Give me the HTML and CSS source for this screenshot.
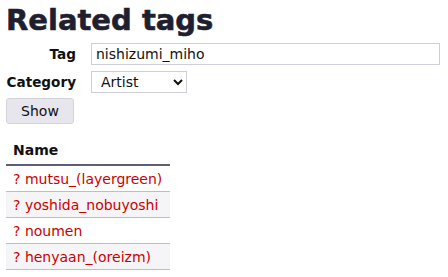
FILE: index.html
```html
<!DOCTYPE html>
<html>
<head>
<meta charset="utf-8">
<link rel="stylesheet" href="styles.css">
</head>
<body>
<div class="page">
  <h1 class="title">Related tags</h1>
  <form class="search-form">
    <label class="field-label" for="tag">Tag</label>
    <input class="text-input" id="tag" type="text" value="nishizumi_miho">
    <label class="field-label" for="cat">Category</label>
    <div class="select-wrap">
      <select class="select-input" id="cat">
        <option>Artist</option>
      </select>
    </div>
  </form>
  <button class="show-button" type="button">Show</button>
  <table class="tags-table">
    <thead>
      <tr><th>Name</th></tr>
    </thead>
    <tbody>
      <tr><td><a class="tag-link" href="#">? mutsu_(layergreen)</a></td></tr>
      <tr class="even"><td><a class="tag-link" href="#">? yoshida_nobuyoshi</a></td></tr>
      <tr><td><a class="tag-link" href="#">? noumen</a></td></tr>
      <tr class="even"><td><a class="tag-link" href="#">? henyaan_(oreizm)</a></td></tr>
    </tbody>
  </table>
</div>
</body>
</html>
```

FILE: styles.css
```css
html, body {
  margin: 0;
  padding: 0;
  background: #fff;
}
body {
  font-family: "DejaVu Sans", Verdana, sans-serif;
  font-size: 14px;
  color: #111;
}
.page {
  padding: 0 6px;
}
.title {
  margin: 0;
  padding-top: 2px;
  font-size: 29px;
  line-height: 36px;
  font-weight: bold;
  color: #1f1f30;
  -webkit-text-stroke: 0.6px #1f1f30;
}
.search-form {
  display: grid;
  grid-template-columns: 70px 1fr;
  column-gap: 15px;
  row-gap: 6px;
  align-items: center;
  margin-top: 5px;
}
.field-label {
  text-align: right;
  font-weight: bold;
  font-size: 13.6px;
}
.text-input {
  box-sizing: border-box;
  height: 22px;
  width: 349px;
  border: 1px solid #cfcfdc;
  padding: 0 4px;
  font-family: "DejaVu Sans", Verdana, sans-serif;
  font-size: 14px;
  color: #111;
  outline: none;
}
.select-input {
  box-sizing: border-box;
  height: 22px;
  width: 96px;
  border: 1px solid #cfcfdc;
  background: #fff;
  font-family: "DejaVu Sans", Verdana, sans-serif;
  font-size: 14px;
  color: #111;
  padding: 0 5px;
}
.show-button {
  display: block;
  box-sizing: border-box;
  margin-top: 5px;
  width: 68px;
  height: 26px;
  border: 1px solid #d4d4dc;
  border-radius: 3px;
  background: #e6e6ec;
  font-family: "DejaVu Sans", Verdana, sans-serif;
  font-size: 14px;
  color: #111;
}
.tags-table {
  margin-top: 12px;
  border-collapse: collapse;
  width: 164px;
}
.tags-table th {
  text-align: left;
  font-weight: bold;
  padding: 5px 7px 5px;
  border-bottom: 2px solid #5f5f7a;
  height: 18px;
}
.tags-table td {
  padding: 0 7px;
  height: 25px;
  border-bottom: 1px solid #bdbdc2;
}
.tags-table tr.even td {
  background: #f5f5f8;
}
.tag-link {
  color: #c00;
  text-decoration: none;
  white-space: nowrap;
}
```
